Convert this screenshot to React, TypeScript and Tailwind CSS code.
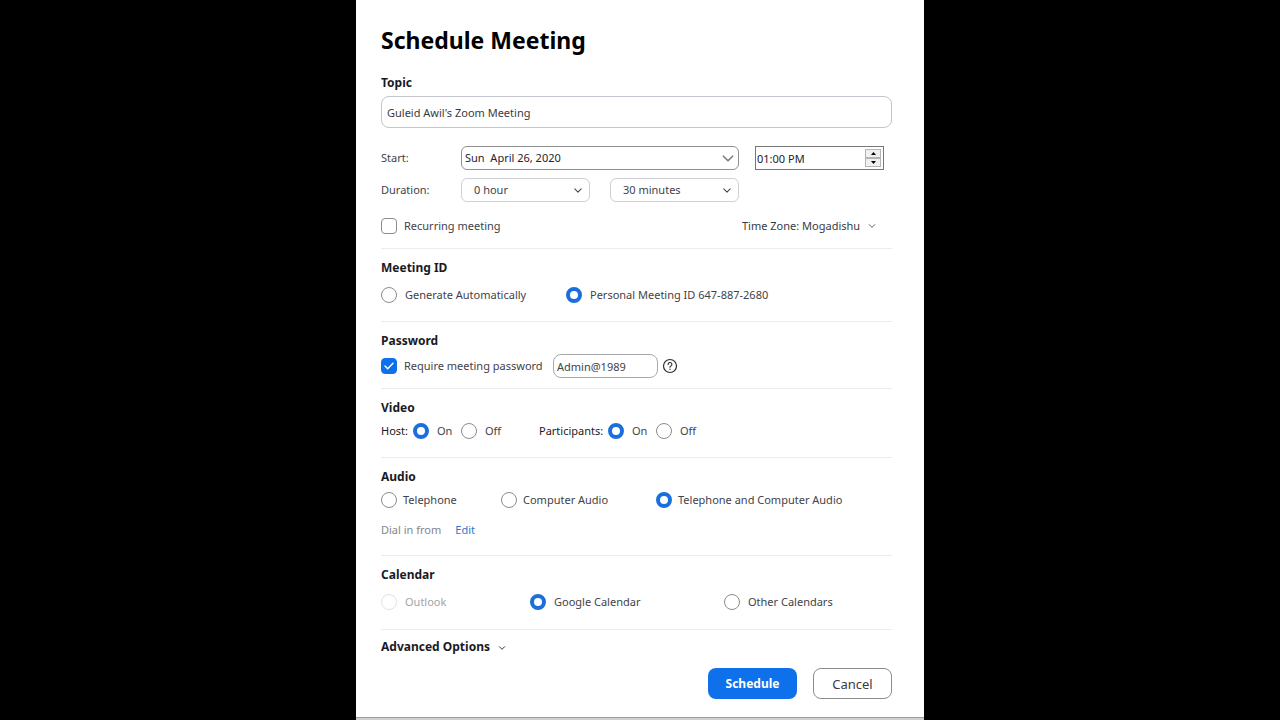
import React, { useState } from 'react';

interface RadioProps {
    name: string;
    label: string;
    value: string;
    selected: string;
    onSelect: (value: string) => void;
    disabled?: boolean;
    className?: string;
}

// Radio with its label, the ring is drawn with a thick border
const Radio = ({ name, label, value, selected, onSelect, disabled, className = 'gap-2' }: RadioProps) => (
    <label className={`flex items-center ${disabled ? 'text-[#a3a3a6]' : ''} ${className}`}>
        <input
            type="radio"
            name={name}
            value={value}
            checked={selected === value}
            disabled={disabled}
            onChange={() => onSelect(value)}
            className="size-4 shrink-0 appearance-none rounded-full border border-[#8c8c8e] bg-white checked:border-4 checked:border-[#1a6fdc] disabled:border-[#e2e2e4]"
        />
        <span className="whitespace-nowrap">{label}</span>
    </label>
);

const Chevron = ({ className = '' }: { className?: string }) => (
    <svg viewBox="0 0 10 6" fill="none" stroke="currentColor" className={`pointer-events-none ${className}`}>
        <path d="M1 1l4 4 4-4" strokeWidth="1.3" strokeLinecap="round" strokeLinejoin="round" />
    </svg>
);

interface DropdownProps {
    id: string;
    label?: string;
    options: string[];
    className?: string;
    chevronClassName?: string;
}

const Dropdown = ({ id, label, options, className = '', chevronClassName = '' }: DropdownProps) => (
    <div className="grid items-center">
        <select id={id} aria-label={label} className={`col-start-1 row-start-1 h-6 appearance-none rounded-md border bg-white ${className}`}>
            {options.map((option) => (
                <option key={option}>{option}</option>
            ))}
        </select>
        <Chevron className={`col-start-1 row-start-1 justify-self-end ${chevronClassName}`} />
    </div>
);

const Heading = ({ children }: { children: React.ReactNode }) => (
    <h2 className="text-[12px] leading-5 font-bold text-[#1a1a24]">{children}</h2>
);

const Section = ({ title, className = '', children }: { title: string; className?: string; children: React.ReactNode }) => (
    <section className={`border-t border-[#ececee] pt-[9px] ${className}`}>
        <Heading>{title}</Heading>
        {children}
    </section>
);

export default function App() {
    const [topic, setTopic] = useState("Guleid Awil's Zoom Meeting");
    const [time, setTime] = useState('01:00 PM');
    const [recurring, setRecurring] = useState(false);
    const [meetingId, setMeetingId] = useState('personal');
    const [requirePassword, setRequirePassword] = useState(true);
    const [password, setPassword] = useState('Admin@1989');
    const [hostVideo, setHostVideo] = useState('on');
    const [participantVideo, setParticipantVideo] = useState('on');
    const [audio, setAudio] = useState('both');
    const [calendar, setCalendar] = useState('google');

    return (
        <div className="min-h-screen bg-black">
            <main className="mx-auto w-full max-w-[568px] border-b-2 border-[#cfcfcf] bg-white font-['Noto_Sans','Open_Sans',sans-serif] text-[11px] leading-4 text-[#42424a]">
                <form className="border-b border-[#9c9c9c] pt-6 pr-8 pb-[18px] pl-[25px]" onSubmit={(e) => e.preventDefault()}>
                    <h1 className="text-[23px] leading-8 font-bold text-black">Schedule Meeting</h1>

                    {/* Topic */}
                    <label htmlFor="topic" className="mt-[17px] block text-[12px] leading-5 font-bold text-[#1a1a24]">Topic</label>
                    <input
                        id="topic"
                        type="text"
                        value={topic}
                        onChange={(e) => setTopic(e.target.value)}
                        className="mt-[3px] h-8 w-full rounded-lg border border-[#c4c4ce] px-[5px] text-[#3a3a42]"
                    />

                    {/* Start and duration */}
                    <div className="mt-[18px] flex items-center">
                        <label htmlFor="start" className="w-20">Start:</label>
                        <Dropdown
                            id="start"
                            options={['Sun\u00a0 April 26, 2020', 'Mon\u00a0 April 27, 2020']}
                            className="w-[278px] border-[#8f8f91] px-[3px] text-[#24242c]"
                            chevronClassName="mr-[5px] h-[7px] w-3 text-[#77777c]"
                        />
                        <div className="ml-4 flex h-6 w-[129px] items-center border border-[#77777a] pr-0.5">
                            <input
                                aria-label="Start time"
                                type="text"
                                value={time}
                                onChange={(e) => setTime(e.target.value)}
                                className="h-5 w-full min-w-0 pl-px text-[#24242c]"
                            />
                            <div className="flex w-4 shrink-0 flex-col text-black">
                                <button type="button" aria-label="Later" className="flex h-[9px] items-center justify-center border border-[#b4b4b4] bg-[#f0f0f0]">
                                    <svg viewBox="0 0 5 3" className="h-[3px] w-[5px] fill-current"><path d="M0 3L2.5 0 5 3z" /></svg>
                                </button>
                                <button type="button" aria-label="Earlier" className="flex h-[9px] items-center justify-center border border-[#b4b4b4] bg-[#f0f0f0]">
                                    <svg viewBox="0 0 5 3" className="h-[3px] w-[5px] fill-current"><path d="M0 0h5L2.5 3z" /></svg>
                                </button>
                            </div>
                        </div>
                    </div>
                    <div className="mt-2 flex items-center">
                        <label htmlFor="hours" className="w-20">Duration:</label>
                        <Dropdown
                            id="hours"
                            options={['0 hour', '1 hour', '2 hours']}
                            className="w-[129px] border-[#cfcfd6] px-3"
                            chevronClassName="mr-2 h-[5px] w-2"
                        />
                        <div className="ml-5">
                            <Dropdown
                                id="minutes"
                                label="Minutes"
                                options={['30 minutes', '45 minutes', '0 minutes']}
                                className="w-[129px] border-[#cfcfd6] px-3"
                                chevronClassName="mr-2 h-[5px] w-2"
                            />
                        </div>
                    </div>
                    <div className="mt-3 mb-2.5 flex items-center justify-between">
                        <label className="flex items-center gap-[7px]">
                            <input
                                type="checkbox"
                                checked={recurring}
                                onChange={(e) => setRecurring(e.target.checked)}
                                className="size-4 appearance-none rounded-sm border border-[#8c8c8e] bg-white checked:bg-[#0e71eb]"
                            />
                            Recurring meeting
                        </label>
                        <div className="mr-4">
                            <Dropdown
                                id="timezone"
                                label="Time zone"
                                options={['Time Zone: Mogadishu', 'Time Zone: Nairobi']}
                                className="border-transparent pr-3.5 text-[#3a3a42]"
                                chevronClassName="h-1 w-2"
                            />
                        </div>
                    </div>

                    <Section title="Meeting ID" className="pb-[18px]">
                        <div className="mt-[9px] flex" role="radiogroup" aria-label="Meeting ID">
                            <Radio name="meetingId" label="Generate Automatically" value="auto" selected={meetingId} onSelect={setMeetingId} className="w-[185px] gap-2" />
                            <Radio name="meetingId" label="Personal Meeting ID 647-887-2680" value="personal" selected={meetingId} onSelect={setMeetingId} />
                        </div>
                    </Section>

                    <Section title="Password" className="pb-2.5">
                        <div className="mt-[3px] flex items-center">
                            <label className="flex w-[172px] items-center gap-[7px] whitespace-nowrap">
                                <span className="grid shrink-0 place-items-center">
                                    <input
                                        type="checkbox"
                                        checked={requirePassword}
                                        onChange={(e) => setRequirePassword(e.target.checked)}
                                        className="col-start-1 row-start-1 size-4 appearance-none rounded-sm border border-[#8c8c8e] bg-white checked:border-[#0e71eb] checked:bg-[#0e71eb]"
                                    />
                                    <svg viewBox="0 0 10 8" fill="none" stroke="white" className="pointer-events-none col-start-1 row-start-1 h-2 w-2.5">
                                        <path d="M1 4l2.7 2.7L9 1.2" strokeWidth="1.4" strokeLinecap="round" strokeLinejoin="round" />
                                    </svg>
                                </span>
                                Require meeting password
                            </label>
                            <input
                                aria-label="Meeting password"
                                type="text"
                                value={password}
                                onChange={(e) => setPassword(e.target.value)}
                                className="h-6 w-[105px] rounded-lg border border-[#a9a9ad] px-[3px]"
                            />
                            <button type="button" aria-label="Password help" className="ml-1 text-[#2c2c34]">
                                <svg viewBox="0 0 16 16" fill="none" stroke="currentColor" className="size-4">
                                    <circle cx="8" cy="8" r="6.5" strokeWidth="1.2" />
                                    <path d="M6.1 6.5a1.9 1.9 0 1 1 2.8 1.6c-.6.3-.9.6-.9 1.2" strokeWidth="1.1" strokeLinecap="round" />
                                    <circle cx="8" cy="11.2" r=".7" fill="currentColor" stroke="none" />
                                </svg>
                            </button>
                        </div>
                    </Section>

                    <Section title="Video" className="pb-[18px]">
                        <div className="mt-[5px] flex items-center">
                            <div className="flex w-[158px] items-center" role="radiogroup" aria-label="Host video">
                                <span className="w-8 text-[#1a1a24]">Host:</span>
                                <Radio name="host" label="On" value="on" selected={hostVideo} onSelect={setHostVideo} className="w-12 gap-2" />
                                <Radio name="host" label="Off" value="off" selected={hostVideo} onSelect={setHostVideo} />
                            </div>
                            <div className="flex items-center" role="radiogroup" aria-label="Participants video">
                                <span className="w-[69px] text-[#1a1a24]">Participants:</span>
                                <Radio name="participants" label="On" value="on" selected={participantVideo} onSelect={setParticipantVideo} className="w-12 gap-2" />
                                <Radio name="participants" label="Off" value="off" selected={participantVideo} onSelect={setParticipantVideo} />
                            </div>
                        </div>
                    </Section>

                    <Section title="Audio" className="pb-[17px]">
                        <div className="mt-[5px] flex" role="radiogroup" aria-label="Audio">
                            <Radio name="audio" label="Telephone" value="phone" selected={audio} onSelect={setAudio} className="w-[120px] gap-1.5" />
                            <Radio name="audio" label="Computer Audio" value="computer" selected={audio} onSelect={setAudio} className="w-[155px] gap-1.5" />
                            <Radio name="audio" label="Telephone and Computer Audio" value="both" selected={audio} onSelect={setAudio} className="gap-1.5" />
                        </div>
                        <p className="mt-3.5 flex gap-3.5 text-[#85858c]">
                            Dial in from
                            <a href="#edit" className="text-[#2f78cc]">Edit</a>
                        </p>
                    </Section>

                    <Section title="Calendar" className="pb-[19px]">
                        <div className="mt-[9px] flex" role="radiogroup" aria-label="Calendar">
                            <Radio name="calendar" label="Outlook" value="outlook" selected={calendar} onSelect={setCalendar} disabled className="w-[149px] gap-2" />
                            <Radio name="calendar" label="Google Calendar" value="google" selected={calendar} onSelect={setCalendar} className="w-[194px] gap-2" />
                            <Radio name="calendar" label="Other Calendars" value="other" selected={calendar} onSelect={setCalendar} />
                        </div>
                    </Section>

                    <div className="border-t border-[#ececee] pt-[7px]">
                        <button type="button" className="flex items-center gap-2 text-[12px] leading-5 font-bold text-[#1a1a24]">
                            Advanced Options
                            <Chevron className="mt-0.5 h-1 w-2" />
                        </button>
                    </div>

                    <div className="mt-[11px] flex justify-end gap-4">
                        <button type="submit" className="h-[31px] w-[89px] rounded-lg bg-[#0e71eb] text-[12px] font-bold text-white">
                            Schedule
                        </button>
                        <button type="button" className="h-[31px] w-[79px] rounded-lg border border-[#8c8c8e] text-[13px] text-[#3a3a42]">
                            Cancel
                        </button>
                    </div>
                </form>
            </main>
        </div>
    );
}
